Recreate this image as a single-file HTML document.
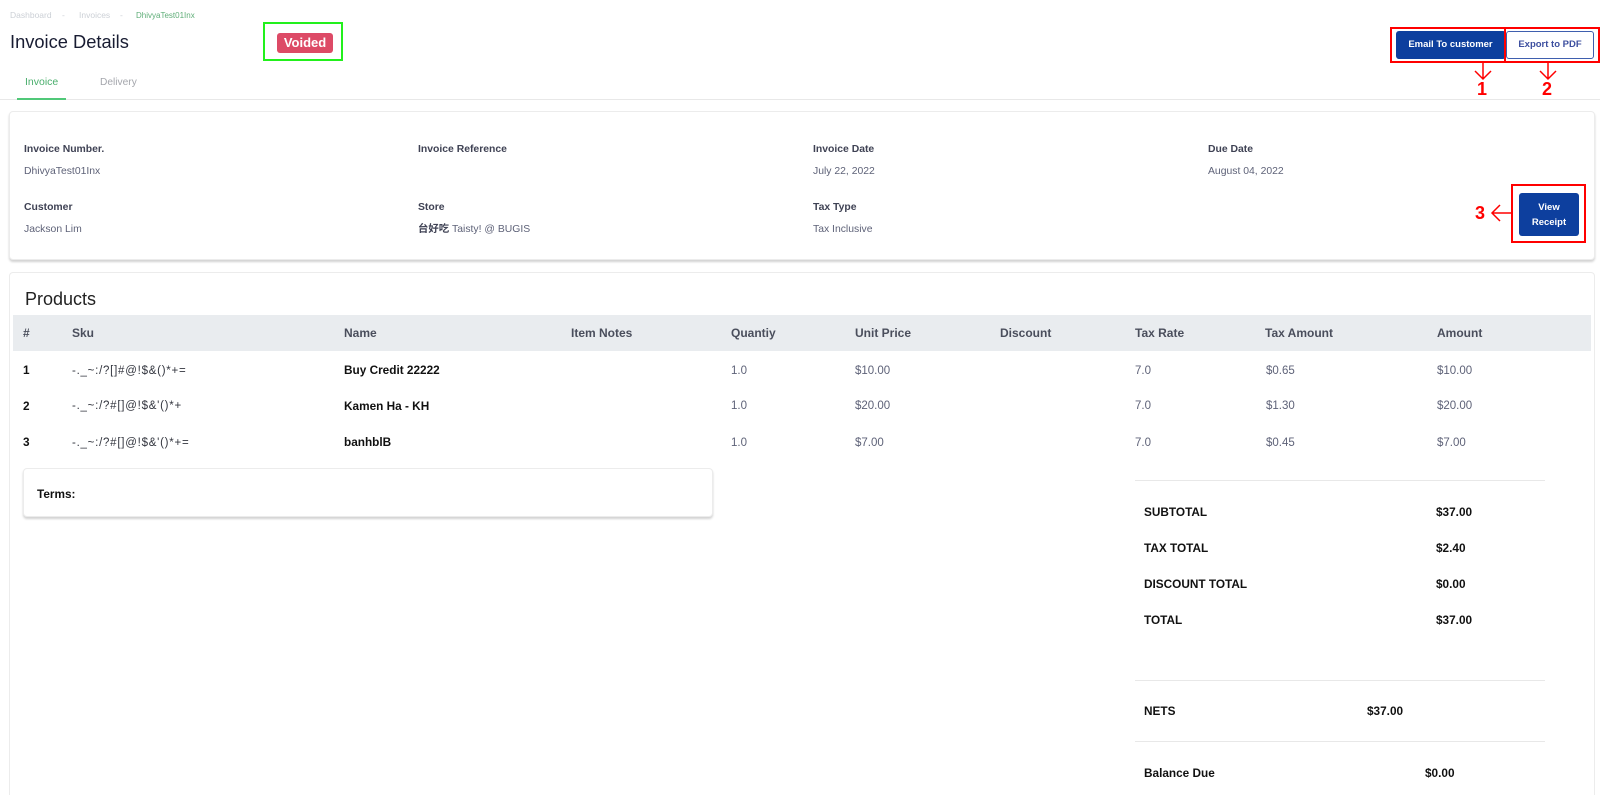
<!DOCTYPE html>
<html><head><meta charset="utf-8"><style>
html,body{margin:0;padding:0;background:#fff;width:1600px;height:795px;overflow:hidden}
body{position:relative;font-family:"Liberation Sans","Noto Sans CJK SC",sans-serif;color:#444}
.t{position:absolute;line-height:20px;height:20px;white-space:nowrap;font-size:10.5px}
.b{position:absolute}
.l{font-weight:bold;color:#3f4254;font-size:10.4px}
.v{color:#5e6278;font-size:10.4px}
.h{font-weight:bold;color:#4a4e5c;font-size:12px}
.r{color:#5e6278;font-size:11.5px}
.s{color:#33363f;font-size:11.5px;letter-spacing:.75px}
.k{font-weight:bold;color:#111;font-size:11.8px}
.card{position:absolute;background:#fff;border:1px solid #ececec;border-radius:4px;box-sizing:border-box}
</style></head><body>
<div class="t" style="left:10px;top:5px;font-size:8.5px;color:#ccd0d6">Dashboard</div>
<div class="t" style="left:62px;top:5px;font-size:8.5px;color:#ccd0d6">-</div>
<div class="t" style="left:79px;top:5px;font-size:8.5px;color:#ccd0d6">Invoices</div>
<div class="t" style="left:120px;top:5px;font-size:8.5px;color:#ccd0d6">-</div>
<div class="t" style="left:136px;top:6px;font-size:8px;color:#5fae78">DhivyaTest01Inx</div>
<div class="t" style="left:10px;top:32px;font-size:18.3px;color:#181c32">Invoice Details</div>
<div class="b" style="left:263px;top:22px;width:80px;height:39px;border:2px solid #22f01c;box-sizing:border-box"></div>
<div class="b" style="left:277px;top:33px;width:56px;height:20px;background:#dd4a66;border-radius:3px"></div>
<div class="t" style="left:277px;top:33px;width:56px;text-align:center;color:#fff;font-weight:bold;font-size:13px">Voided</div>
<div class="t" style="left:25px;top:72px;color:#4aae6c;font-size:10.5px">Invoice</div>
<div class="t" style="left:100px;top:73px;color:#a4a6ac;font-size:10.2px">Delivery</div>
<div class="b" style="left:0;top:99px;width:1600px;height:1px;background:#e8e8e8"></div>
<div class="b" style="left:17px;top:98px;width:49px;height:1.5px;background:#50c878"></div>

<div class="b" style="left:1396px;top:31px;width:110px;height:28px;background:#0d3f9e;border-radius:3px"></div>
<div class="t" style="left:1396px;top:35px;width:109px;text-align:center;color:#fff;font-weight:bold;font-size:9.5px">Email To customer</div>
<div class="b" style="left:1506px;top:31px;width:88px;height:28px;background:#fff;border:1px solid #3f5fae;box-sizing:border-box;border-radius:3px"></div>
<div class="t" style="left:1506px;top:35px;width:88px;text-align:center;color:#3d4f9f;font-weight:bold;font-size:9.5px">Export to PDF</div>
<div class="b" style="left:1390px;top:27px;width:116px;height:36px;border:2px solid #f00;box-sizing:border-box"></div>
<div class="b" style="left:1504px;top:27px;width:96px;height:36px;border:2px solid #f00;box-sizing:border-box"></div>
<svg class="b" style="left:1470px;top:62px" width="92" height="20" fill="none" stroke="#f00" stroke-width="1.5"><path d="M13 0V16M5 9L13 17L21 9"/><path d="M78 0V16M70 9L78 17L86 9"/></svg>
<div class="t" style="left:1477px;top:79px;color:#f00;font-weight:bold;font-size:18px">1</div>
<div class="t" style="left:1542px;top:79px;color:#f00;font-weight:bold;font-size:18px">2</div>

<div class="card" style="left:9px;top:111px;width:1586px;height:149px;box-shadow:0 2px 2px rgba(0,0,0,.18)"></div>
<div class="t l" style="left:24px;top:140px">Invoice Number.</div>
<div class="t v" style="left:24px;top:162px">DhivyaTest01Inx</div>
<div class="t l" style="left:418px;top:140px">Invoice Reference</div>
<div class="t l" style="left:813px;top:140px">Invoice Date</div>
<div class="t v" style="left:813px;top:162px">July 22, 2022</div>
<div class="t l" style="left:1208px;top:140px">Due Date</div>
<div class="t v" style="left:1208px;top:162px">August 04, 2022</div>
<div class="t l" style="left:24px;top:198px">Customer</div>
<div class="t v" style="left:24px;top:220px">Jackson Lim</div>
<div class="t l" style="left:418px;top:198px">Store</div>
<div class="t v" style="left:418px;top:220px"><b style="color:#3f4254">台好吃</b> Taisty! @ BUGIS</div>
<div class="t l" style="left:813px;top:198px">Tax Type</div>
<div class="t v" style="left:813px;top:220px">Tax Inclusive</div>
<div class="b" style="left:1519px;top:193px;width:60px;height:43px;background:#0d3f9e;border-radius:3px"></div>
<div class="t" style="left:1519px;top:198px;width:60px;text-align:center;color:#fff;font-weight:bold;font-size:9.5px">View</div>
<div class="t" style="left:1519px;top:213px;width:60px;text-align:center;color:#fff;font-weight:bold;font-size:9.5px">Receipt</div>
<div class="b" style="left:1511px;top:184px;width:75px;height:59px;border:2px solid #f00;box-sizing:border-box"></div>
<div class="t" style="left:1475px;top:203px;color:#f00;font-weight:bold;font-size:18px">3</div>
<svg class="b" style="left:1490px;top:204px" width="22" height="18" fill="none" stroke="#f00" stroke-width="1.5"><path d="M22 9H2M10 1L2 9L10 17"/></svg>

<div class="card" style="left:9px;top:272px;width:1586px;height:540px"></div>
<div class="t" style="left:25px;top:289px;font-size:18px;color:#222">Products</div>
<div class="b" style="left:13px;top:315px;width:1578px;height:36px;background:#e9ecef"></div>
<div class="t h" style="left:23px;top:323px">#</div>
<div class="t h" style="left:72px;top:323px">Sku</div>
<div class="t h" style="left:344px;top:323px">Name</div>
<div class="t h" style="left:571px;top:323px">Item Notes</div>
<div class="t h" style="left:731px;top:323px">Quantiy</div>
<div class="t h" style="left:855px;top:323px">Unit Price</div>
<div class="t h" style="left:1000px;top:323px">Discount</div>
<div class="t h" style="left:1135px;top:323px">Tax Rate</div>
<div class="t h" style="left:1265px;top:323px">Tax Amount</div>
<div class="t h" style="left:1437px;top:323px">Amount</div>

<div class="t k" style="left:23px;top:360px">1</div>
<div class="t s" style="left:72px;top:361px">-._~:/?[]#@!$&amp;()*+=</div>
<div class="t k" style="left:344px;top:360px">Buy Credit 22222</div>
<div class="t r" style="left:731px;top:361px">1.0</div>
<div class="t r" style="left:855px;top:361px">$10.00</div>
<div class="t r" style="left:1135px;top:361px">7.0</div>
<div class="t r" style="left:1266px;top:361px">$0.65</div>
<div class="t r" style="left:1437px;top:361px">$10.00</div>

<div class="t k" style="left:23px;top:396px">2</div>
<div class="t s" style="left:72px;top:396px">-._~:/?#[]@!$&amp;'()*+</div>
<div class="t k" style="left:344px;top:396px">Kamen Ha - KH</div>
<div class="t r" style="left:731px;top:396px">1.0</div>
<div class="t r" style="left:855px;top:396px">$20.00</div>
<div class="t r" style="left:1135px;top:396px">7.0</div>
<div class="t r" style="left:1266px;top:396px">$1.30</div>
<div class="t r" style="left:1437px;top:396px">$20.00</div>

<div class="t k" style="left:23px;top:432px">3</div>
<div class="t s" style="left:72px;top:433px">-._~:/?#[]@!$&amp;'()*+=</div>
<div class="t k" style="left:344px;top:432px">banhblB</div>
<div class="t r" style="left:731px;top:433px">1.0</div>
<div class="t r" style="left:855px;top:433px">$7.00</div>
<div class="t r" style="left:1135px;top:433px">7.0</div>
<div class="t r" style="left:1266px;top:433px">$0.45</div>
<div class="t r" style="left:1437px;top:433px">$7.00</div>

<div class="card" style="left:23px;top:468px;width:690px;height:49px;box-shadow:0 2px 2px rgba(0,0,0,.18)"></div>
<div class="t k" style="left:37px;top:484px">Terms:</div>

<div class="b" style="left:1135px;top:480px;width:410px;height:1px;background:#e8e8e8"></div>
<div class="t k" style="left:1144px;top:502px">SUBTOTAL</div>
<div class="t k" style="left:1436px;top:502px">$37.00</div>
<div class="t k" style="left:1144px;top:538px">TAX TOTAL</div>
<div class="t k" style="left:1436px;top:538px">$2.40</div>
<div class="t k" style="left:1144px;top:574px">DISCOUNT TOTAL</div>
<div class="t k" style="left:1436px;top:574px">$0.00</div>
<div class="t k" style="left:1144px;top:610px">TOTAL</div>
<div class="t k" style="left:1436px;top:610px">$37.00</div>
<div class="b" style="left:1135px;top:680px;width:410px;height:1px;background:#e8e8e8"></div>
<div class="t k" style="left:1144px;top:701px">NETS</div>
<div class="t k" style="left:1367px;top:701px">$37.00</div>
<div class="b" style="left:1135px;top:741px;width:410px;height:1px;background:#e8e8e8"></div>
<div class="t k" style="left:1144px;top:763px">Balance Due</div>
<div class="t k" style="left:1425px;top:763px">$0.00</div>
</body></html>
